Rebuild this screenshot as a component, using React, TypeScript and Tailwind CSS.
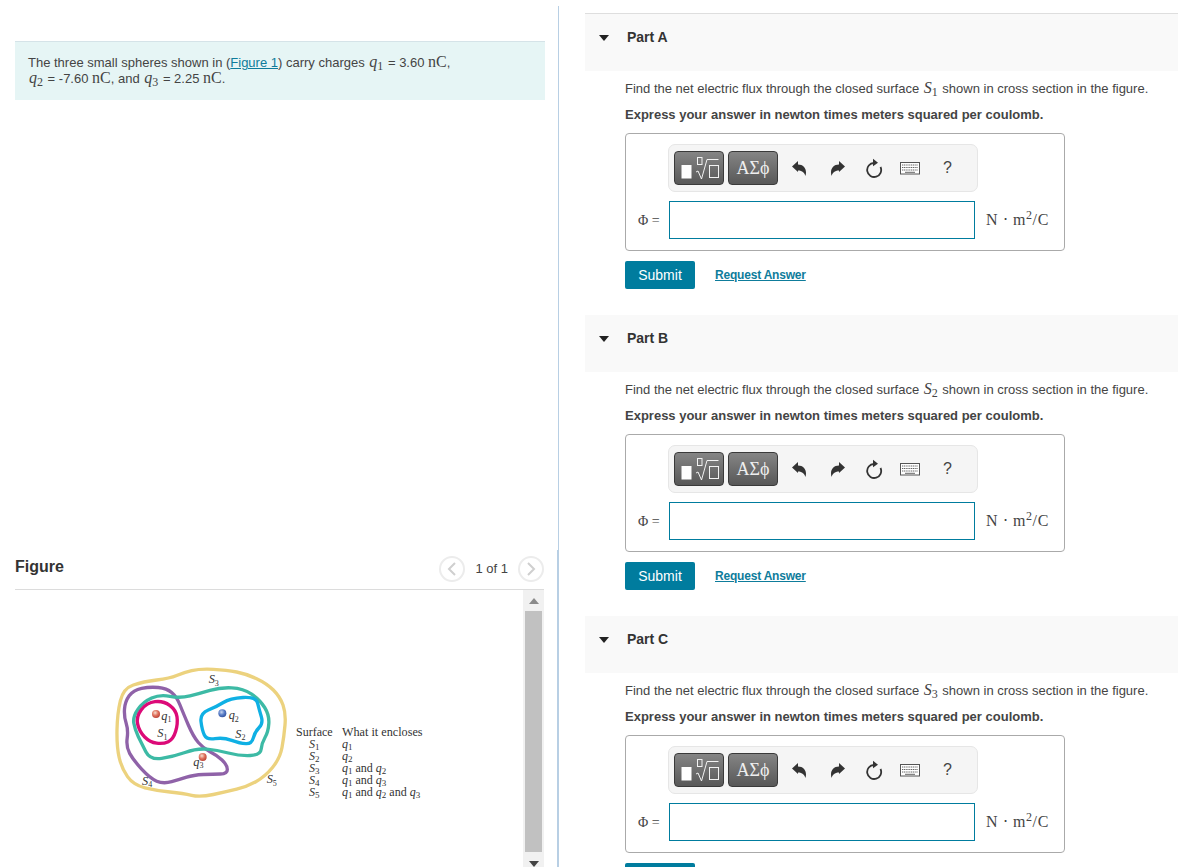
const serif = "font-['Liberation_Serif',serif]";

function smooth(pts: number[][]) {
  const mid = (a: number[], b: number[]) => [(a[0] + b[0]) / 2, (a[1] + b[1]) / 2];
  const start = mid(pts[pts.length - 1], pts[0]);
  let d = `M${start[0]} ${start[1]}`;
  pts.forEach((p, i) => {
    const m = mid(p, pts[(i + 1) % pts.length]);
    d += ` Q${p[0]} ${p[1]} ${m[0]} ${m[1]}`;
  });
  return d + 'Z';
}

const yellow = [[250,38],[300,26],[380,30],[440,42],[500,70],[540,110],[558,160],[552,230],[540,295],[495,350],[440,380],[380,395],[300,412],[250,400],[170,392],[100,375],[65,325],[50,260],[52,160],[70,85],[130,65],[210,55]];
const purple = [[100,90],[150,80],[200,85],[230,110],[250,160],[280,230],[310,265],[350,285],[382,315],[382,342],[340,342],[280,345],[240,358],[190,372],[150,355],[100,300],[78,260],[85,210],[72,170],[75,125]];
const teal = [[98,170],[130,125],[180,103],[240,115],[300,100],[360,82],[430,85],[480,120],[508,165],[505,215],[485,250],[482,285],[420,288],[350,270],[290,265],[220,290],[150,300],[125,250],[105,210]];
const pink = [[108,170],[140,128],[190,122],[228,150],[234,190],[220,238],[190,252],[150,247],[118,215]];
const blue = [[300,160],[350,140],[390,115],[468,110],[478,150],[490,190],[465,215],[455,252],[420,250],[370,232],[320,240],[306,210]];

function Label({ x, y, n, s }: { x: number; y: number; n: string; s: number }) {
  return (
    <text x={x} y={y} fontFamily="Liberation Serif" fontStyle="italic" fontSize="37" fill="#333">
      {n}
      <tspan dy="7" fontSize="24" fontStyle="normal">{s}</tspan>
    </text>
  );
}

function Diagram() {
  return (
    <svg width="196" height="150" viewBox="0 0 588 450" fill="none" strokeWidth="10" strokeLinejoin="round">
      <defs>
        <radialGradient id="red" cx="0.4" cy="0.35" r="0.7">
          <stop offset="0" stopColor="#f7e0d0" />
          <stop offset="0.5" stopColor="#e0735f" />
          <stop offset="1" stopColor="#b83c30" />
        </radialGradient>
        <radialGradient id="blue" cx="0.4" cy="0.35" r="0.7">
          <stop offset="0" stopColor="#c9d6f0" />
          <stop offset="0.5" stopColor="#5b7fc8" />
          <stop offset="1" stopColor="#2f4f9c" />
        </radialGradient>
      </defs>
      <path d={smooth(yellow)} stroke="#ecd27e" />
      <path d={smooth(purple)} stroke="#8f62a8" />
      <path d={smooth(teal)} stroke="#3dbaa5" />
      <path d={smooth(pink)} stroke="#dc0a78" />
      <path d={smooth(blue)} stroke="#0fb0e4" />
      <circle cx="168" cy="162" r="12" fill="url(#red)" />
      <circle cx="367" cy="160" r="12" fill="url(#blue)" />
      <circle cx="308" cy="291" r="12" fill="url(#red)" />
      <Label x={326} y={70} n="S" s={3} />
      <Label x={184} y={180} n="q" s={1} />
      <Label x={172} y={232} n="S" s={1} />
      <Label x={386} y={178} n="q" s={2} />
      <Label x={406} y={234} n="S" s={2} />
      <Label x={280} y={318} n="q" s={3} />
      <Label x={126} y={374} n="S" s={4} />
      <Label x={500} y={370} n="S" s={5} />
    </svg>
  );
}

function Q({ n, big }: { n: number; big?: boolean }) {
  return (
    <span className={`${serif} italic ${big ? 'text-[16px] mx-[1px]' : ''}`}>
      q<sub className="not-italic">{n}</sub>
    </span>
  );
}

function S({ n, big }: { n: number; big?: boolean }) {
  return (
    <span className={`${serif} italic ${big ? 'text-[16px] mx-[1px]' : ''}`}>
      S<sub className="not-italic">{n}</sub>
    </span>
  );
}

function NC() {
  return <span className={`${serif} text-[16px]`}>nC</span>;
}

const enclosures = [
  [1, <Q n={1} />],
  [2, <Q n={2} />],
  [3, <><Q n={1} /> and <Q n={2} /></>],
  [4, <><Q n={1} /> and <Q n={3} /></>],
  [5, <><Q n={1} /> and <Q n={2} /> and <Q n={3} /></>],
] as const;

function EncloseTable() {
  return (
    <div className={`${serif} mt-[66px] text-[12px] leading-[12px] text-[#333]`}>
      <div className="flex">
        <span className="w-[46px]">Surface</span>
        <span className="text-[12.2px]">What it encloses</span>
      </div>
      {enclosures.map(([n, what]) => (
        <div key={n} className="flex h-3">
          <span className="w-[46px] pl-[13px]"><S n={n} /></span>
          <span>{what}</span>
        </div>
      ))}
    </div>
  );
}

function PagerButton({ dir }: { dir: 'left' | 'right' }) {
  return (
    <span className="flex h-[26px] w-[26px] items-center justify-center rounded-full border-2 border-[#ececec]">
      <svg width="10" height="14" viewBox="0 0 10 14" fill="none" stroke="#cfcfcf" strokeWidth="2">
        <path d={dir === 'left' ? 'M8 1 2 7l6 6' : 'M2 1l6 6-6 6'} />
      </svg>
    </span>
  );
}

function LeftColumn() {
  return (
    <div className="relative mt-[6px] flex h-[861px] w-[559px] shrink-0 flex-col border-r border-[#b8cfe4] pl-[15px] pr-[13px]">
      <div className="absolute right-0 top-[544px] h-[317px] w-px bg-[#b8cfe4]" />
      <div className="mt-[35px] h-[59px] w-[530px] border-t border-[#d5e3e8] bg-[#e6f5f5] px-[13px] pt-[12px] text-[13px] leading-[16px] text-[#444]">
        <div className="h-4">
          The three small spheres shown in (<a className="text-[#0e7c9b] underline">Figure 1</a>) carry charges <Q n={1} big /> = 3.60 <NC />,
        </div>
        <div className="h-4">
          <Q n={2} big /> = -7.60 <NC />, and <Q n={3} big /> = 2.25 <NC />.
        </div>
      </div>

      <div className="mt-[454px] flex h-[36px] w-[529px] items-start justify-between border-b border-[#dcdcdc]">
        <span className="mt-[3px] text-[16px] font-bold leading-[20px] text-[#333]">Figure</span>
        <div className="mt-[2px] flex items-center gap-[10px]">
          <PagerButton dir="left" />
          <span className="text-[13px] leading-[20px] text-[#444]">1 of 1</span>
          <PagerButton dir="right" />
        </div>
      </div>

      <div className="flex min-h-0 w-[529px] flex-1">
        <div className="flex w-[508px] items-start pl-[85px] pt-[70px]">
          <Diagram />
          <EncloseTable />
        </div>
        <div className="flex w-[21px] flex-col items-center bg-[#f1f1f1]">
          <div className="flex h-[21px] items-center justify-center">
            <div className="h-0 w-0 border-x-[5px] border-b-[6px] border-x-transparent border-b-[#8a8a8a]" />
          </div>
          <div className="h-[241px] w-[17px] bg-[#c1c1c1]" />
          <div className="flex h-[15px] items-end justify-center">
            <div className="h-0 w-0 border-x-[5px] border-t-[6px] border-x-transparent border-t-[#444]" />
          </div>
        </div>
      </div>
    </div>
  );
}

function ToolButton({ children }: { children: React.ReactNode }) {
  return (
    <div className="flex h-[34px] w-[50px] items-center justify-center rounded-[4px] border border-[#3a3a3a] bg-gradient-to-b from-[#858585] to-[#585858]">
      {children}
    </div>
  );
}

function CurlArrow({ flip, className }: { flip?: boolean; className: string }) {
  return (
    <svg className={className} width="14" height="15" viewBox="0 0 14 15" fill="#333">
      <path
        d="M0 5.5 6 0v3.5c5 0 8 3.5 8 8 0 1.2-.2 2.5-.6 3.5-.6-3-3-5.5-7.4-5.5V11Z"
        transform={flip ? 'matrix(-1 0 0 1 14 0)' : undefined}
      />
    </svg>
  );
}

function Toolbar() {
  return (
    <div className="ml-[42px] flex h-[48px] w-[310px] items-center rounded-[7px] border border-[#e6e6e6] bg-[#f5f5f5] pl-[5px] text-[#333]">
      <ToolButton>
        <svg width="48" height="32" viewBox="1 1 48 32" fill="none" stroke="#f2f2f2" strokeWidth="1">
          <rect x="7.5" y="14" width="10" height="13.5" fill="#fff" stroke="none" />
          <rect x="23.5" y="6.5" width="4.5" height="7" />
          <path d="M22 21l2-1 3.5 8 5.5-19.5h11.5" />
          <rect x="35.5" y="14.5" width="9" height="12" />
        </svg>
      </ToolButton>
      <div className="w-[4px]" />
      <ToolButton>
        <span className={`${serif} text-[18px] text-[#eee]`}>ΑΣϕ</span>
      </ToolButton>
      <CurlArrow className="ml-[14px]" />
      <CurlArrow flip className="ml-[25px]" />
      <svg className="ml-[20px]" width="18" height="20" viewBox="0 0 18 20" fill="none" stroke="#333" strokeWidth="1.8">
        <path d="M9 5a7 7 0 1 0 6.5 4" />
        <path d="M8 .8l5 4-5 3.4z" fill="#333" stroke="none" />
      </svg>
      <svg className="ml-[17px]" width="20" height="13" viewBox="0 0 20 13" fill="none">
        <rect x="0.5" y="0.5" width="19" height="11.5" fill="#fff" stroke="#555" />
        <path d="M2 3h16M2 5.5h16M2 8h16" stroke="#666" strokeDasharray="1.2 .6" />
        <path d="M5 10.3h10" stroke="#666" />
      </svg>
      <span className="ml-[23px] text-[16px] text-[#444]">?</span>
    </div>
  );
}

function Part({ label, n, top }: { label: string; n: number; top?: boolean }) {
  return (
    <section className="flex h-[301px] flex-col">
      <div className={`flex shrink-0 items-center bg-[#f9f9f9] pb-[10px] pl-[14px] ${top ? '-mt-px h-[58px] border-t border-[#dedede]' : 'h-[57px]'}`}>
        <div className="h-0 w-0 border-x-[5px] border-t-[6px] border-x-transparent border-t-[#222]" />
        <span className="ml-[18px] text-[14px] font-bold text-[#333]">{label}</span>
      </div>
      <div className="pl-[40px]">
        <p className="mt-[8px] h-[17px] text-[13px] leading-[17px] text-[#444]">
          Find the net electric flux through the closed surface <S n={n} big /> shown in cross section in the figure.
        </p>
        <p className="mt-[10px] h-[17px] text-[13px] font-bold leading-[17px] text-[#444]">
          Express your answer in newton times meters squared per coulomb.
        </p>
        <div className="mt-[10px] h-[118px] w-[440px] rounded-[4px] border border-[#aaa] pt-[10px]">
          <Toolbar />
          <div className="mt-[9px] flex items-center">
            <span className={`w-[43px] pl-[12px] text-[14px] text-[#444] ${serif}`}>Φ =</span>
            <div className="h-[38px] w-[306px] border border-[#007c9e] bg-white" />
            <span className={`ml-[11px] text-[16px] tracking-[0.6px] text-[#444] ${serif}`}>
              N ⋅ m<sup>2</sup>/C
            </span>
          </div>
        </div>
        <div className="mt-[10px] flex items-center">
          <div className="flex h-[28px] w-[70px] items-center justify-center rounded-[2px] bg-[#007c9e] text-[14px] text-white">
            Submit
          </div>
          <a className="ml-[20px] text-[12px] font-bold tracking-[-0.2px] text-[#0e7c9b] underline">Request Answer</a>
        </div>
      </div>
    </section>
  );
}

export default function App() {
  return (
    <div className="flex h-[867px] w-[1178px] overflow-hidden bg-white font-['Liberation_Sans',Arial,sans-serif]">
      <LeftColumn />
      <div className="ml-[26px] w-[593px] pt-[14px]">
        <Part label="Part A" n={1} top />
        <Part label="Part B" n={2} />
        <Part label="Part C" n={3} />
      </div>
    </div>
  );
}
